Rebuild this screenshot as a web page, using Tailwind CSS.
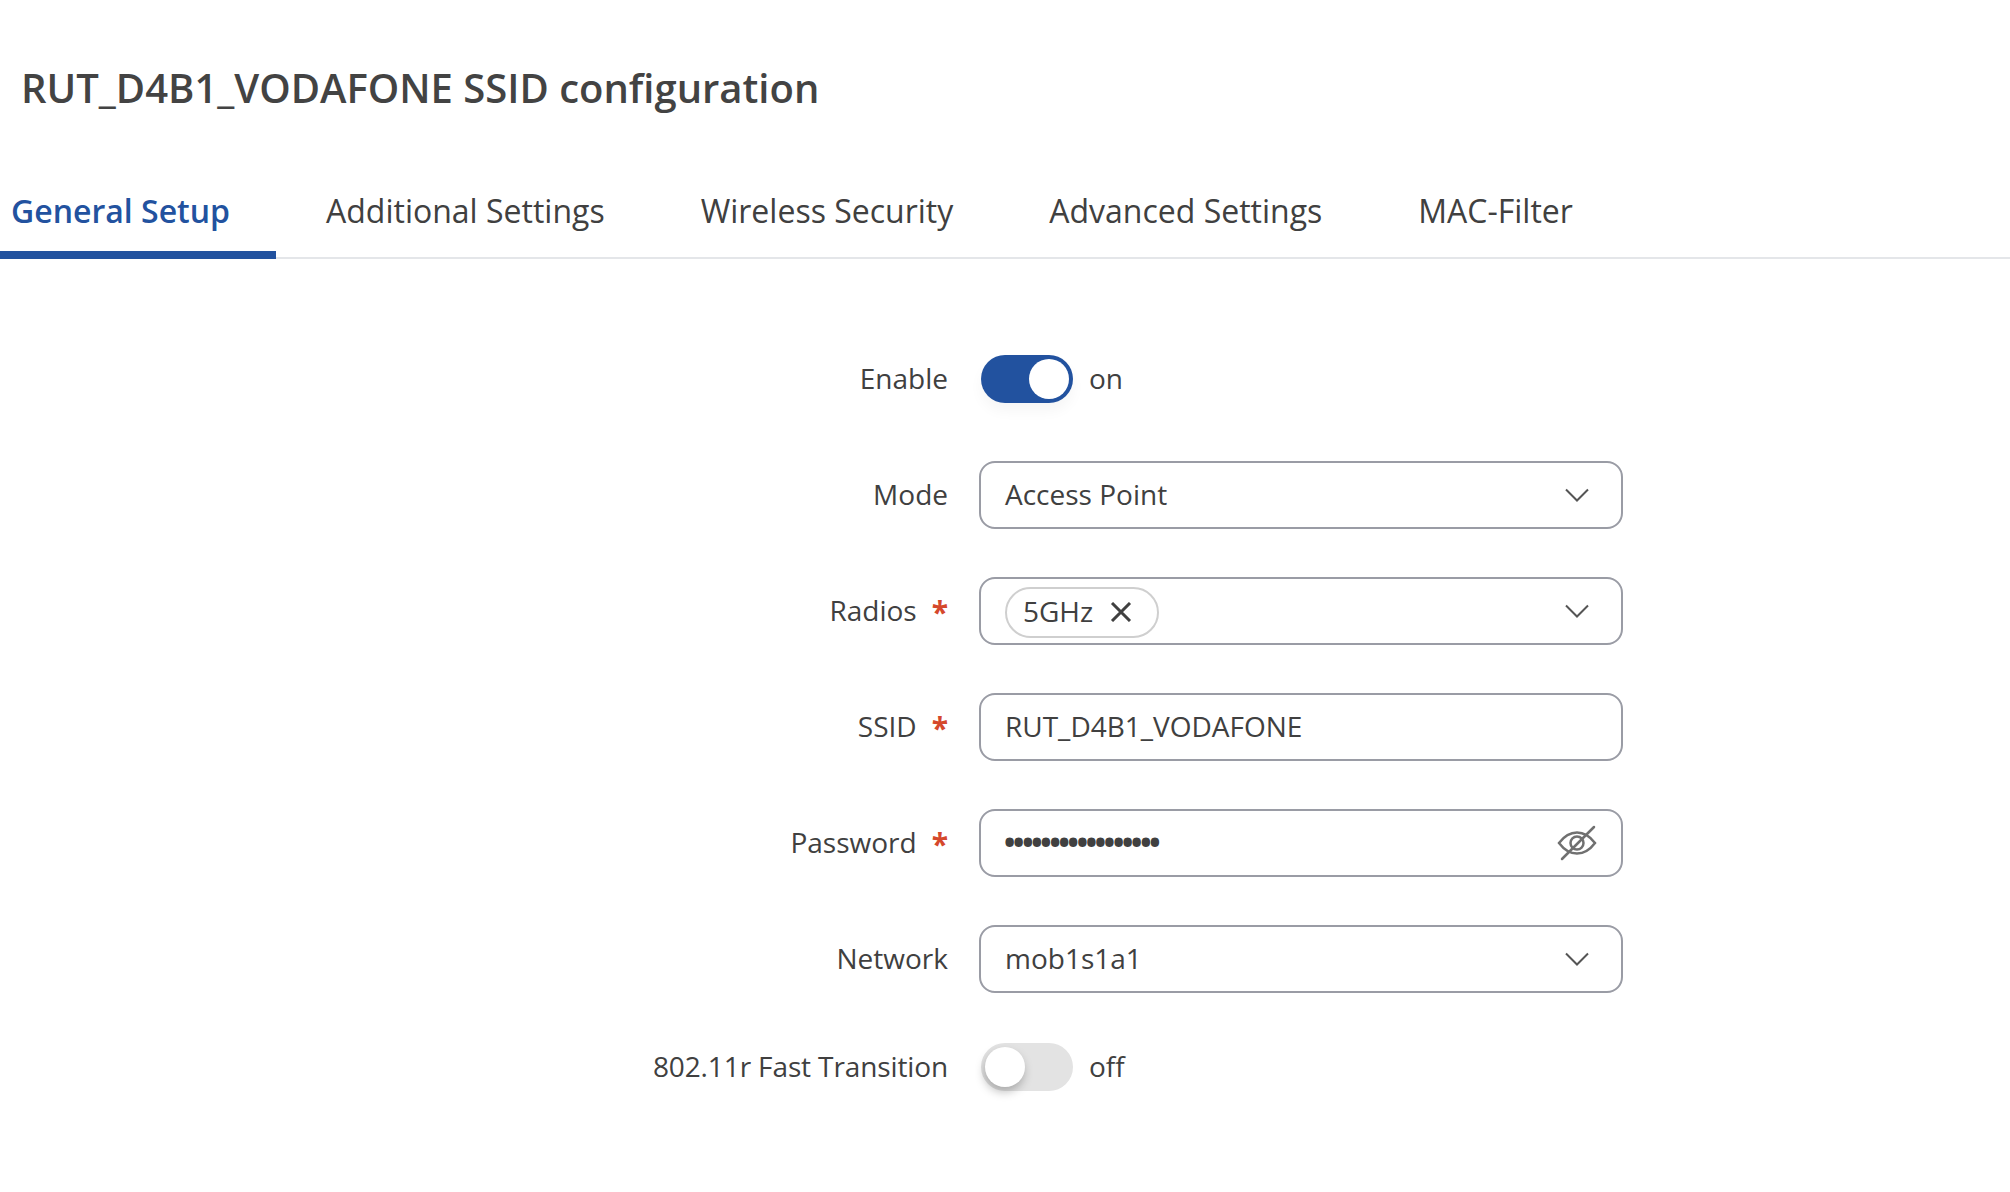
<!DOCTYPE html>
<html lang="en">
<head>
<meta charset="UTF-8">
<title>SSID configuration</title>
<script src="https://cdn.jsdelivr.net/npm/@tailwindcss/browser@4"></script>
</head>
<body class="bg-white font-['Open_Sans',sans-serif] text-[#404040]">
<div class="h-[1192px] w-[2010px] overflow-hidden">
  <h1 class="pl-[21px] pt-[60px] text-[40px] leading-[56px] font-semibold text-[#434343]">RUT_D4B1_VODAFONE SSID configuration</h1>

  <!-- tabs -->
  <div class="mt-[60px] flex h-[83px] border-b-2 border-[#e4e6e9] text-[32px] leading-[44px]">
    <div class="h-[83px] w-[276px] border-b-[8px] border-[#22529f] pl-[11px] pt-[13px] font-semibold text-[#22529f]">General Setup</div>
    <div class="ml-[50px] pt-[13px]">Additional Settings</div>
    <div class="ml-[96px] pt-[13px]">Wireless Security</div>
    <div class="ml-[96px] pt-[13px]">Advanced Settings</div>
    <div class="ml-[96px] pt-[13px]">MAC-Filter</div>
  </div>

  <!-- form -->
  <div class="mt-[96px] flex flex-col text-[28px] leading-[38px]">
    <div class="flex h-[48px] items-center">
      <div class="w-[948px] pb-[2px] text-right">Enable</div>
      <div class="ml-[33px] flex h-[48px] w-[92px] items-center justify-end rounded-full bg-[#22529f] pr-[4px] shadow-[0_8px_14px_rgba(0,0,0,0.04)]"><div class="h-[40px] w-[40px] rounded-full bg-white"></div></div>
      <div class="ml-[16px] pb-[2px]">on</div>
    </div>

    <div class="mt-[58px] flex h-[68px] items-center">
      <div class="w-[948px] pb-[2px] text-right">Mode</div>
      <div class="ml-[31px] flex h-[68px] w-[644px] items-center justify-between rounded-[16px] border-2 border-[#9a9ca5] pl-[24px] pr-[32px]">
        <span class="pb-[2px]">Access Point</span>
        <svg width="24" height="14" viewBox="0 0 24 14" fill="none" stroke="#555" stroke-width="2"><path d="M1 1.5 12 12.5 23 1.5"/></svg>
      </div>
    </div>

    <div class="mt-[48px] flex h-[68px] items-center">
      <div class="flex w-[948px] items-center justify-end pb-[2px]">Radios<span class="ml-[15px] translate-y-[2px] text-[30px] font-bold text-[#d5482c]">*</span></div>
      <div class="ml-[31px] flex h-[68px] w-[644px] items-center justify-between rounded-[16px] border-2 border-[#9a9ca5] pl-[24px] pr-[32px]">
        <div class="mt-[2px] flex h-[51px] w-[154px] items-center rounded-full border-2 border-[#cfcfcf] pl-[16px]">
          <span class="pb-[2px]">5GHz</span>
          <svg class="ml-[17px]" width="22" height="20" viewBox="0 0 22 20" fill="none" stroke="#404040" stroke-width="3"><path d="M2 1 20 19M20 1 2 19"/></svg>
        </div>
        <svg width="24" height="14" viewBox="0 0 24 14" fill="none" stroke="#555" stroke-width="2"><path d="M1 1.5 12 12.5 23 1.5"/></svg>
      </div>
    </div>

    <div class="mt-[48px] flex h-[68px] items-center">
      <div class="flex w-[948px] items-center justify-end pb-[2px]">SSID<span class="ml-[15px] translate-y-[2px] text-[30px] font-bold text-[#d5482c]">*</span></div>
      <div class="ml-[31px] flex h-[68px] w-[644px] items-center rounded-[16px] border-2 border-[#9a9ca5] pb-[2px] pl-[24px] pr-[32px]">RUT_D4B1_VODAFONE</div>
    </div>

    <div class="mt-[48px] flex h-[68px] items-center">
      <div class="flex w-[948px] items-center justify-end pb-[2px]">Password<span class="ml-[15px] translate-y-[2px] text-[30px] font-bold text-[#d5482c]">*</span></div>
      <div class="ml-[31px] flex h-[68px] w-[644px] items-center justify-between rounded-[16px] border-2 border-[#9a9ca5] pl-[23px] pr-[24px]">
        <span class="pb-[2px] text-[30px] font-bold tracking-[-2.2px]">•••••••••••••••••</span>
        <svg width="40" height="36" viewBox="0 0 40 36" fill="none" stroke="#707070" stroke-width="2.5"><path d="M2 18C8 10 14 7.5 20 7.5S32 10 38 18C32 26 26 28.5 20 28.5S8 26 2 18Z"/><circle cx="20" cy="18" r="6.5"/><path d="M5 34 37 2" stroke-linecap="round"/></svg>
      </div>
    </div>

    <div class="mt-[48px] flex h-[68px] items-center">
      <div class="w-[948px] pb-[2px] text-right">Network</div>
      <div class="ml-[31px] flex h-[68px] w-[644px] items-center justify-between rounded-[16px] border-2 border-[#9a9ca5] pl-[24px] pr-[32px]">
        <span class="pb-[2px]">mob1s1a1</span>
        <svg width="24" height="14" viewBox="0 0 24 14" fill="none" stroke="#555" stroke-width="2"><path d="M1 1.5 12 12.5 23 1.5"/></svg>
      </div>
    </div>

    <div class="mt-[50px] flex h-[48px] items-center">
      <div class="w-[948px] pb-[2px] text-right tracking-[-0.12px]">802.11r Fast Transition</div>
      <div class="ml-[33px] flex h-[48px] w-[92px] items-center rounded-full bg-[#e3e3e3] pl-[4px]"><div class="h-[40px] w-[40px] rounded-full bg-white shadow-[-1px_5px_10px_rgba(0,0,0,0.25)]"></div></div>
      <div class="ml-[16px] pb-[2px]">off</div>
    </div>
  </div>
</div>
</body>
</html>
